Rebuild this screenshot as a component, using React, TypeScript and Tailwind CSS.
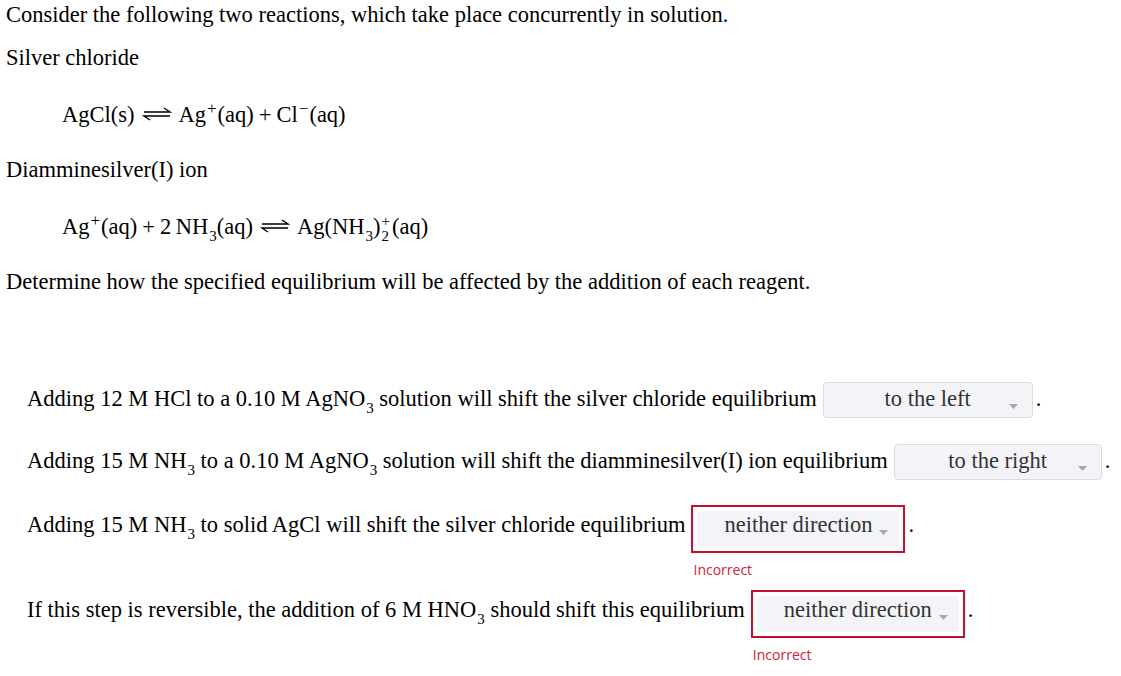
import type { ReactNode } from "react";

const serif = "font-['Liberation_Serif','Times_New_Roman',serif]";

function Sub({ children }: { children: ReactNode }) {
  return <span className="text-[15px] leading-[0] align-[-7px] ml-[1px]">{children}</span>;
}

function Sup({ children }: { children: ReactNode }) {
  return <span className="text-[17px] leading-[0] align-[8px] mx-[1px]">{children}</span>;
}

function Plus() {
  return <span className="mx-[5px]">+</span>;
}

/** stacked charge over count, e.g. )₂⁺ */
function SupSub({ sup, sub }: { sup: string; sub: string }) {
  return (
    <span className="inline-flex flex-col align-[8px] text-[15px] leading-[15px] px-[1px] mr-[1px]">
      <span>{sup}</span>
      <span>{sub}</span>
    </span>
  );
}

function Equilibrium() {
  return (
    <svg width="30" height="14" viewBox="0 0 30 14" className="inline-block mx-[7px] align-[1px]">
      <path d="M2 5 H28 L22 1" fill="none" stroke="#000" strokeWidth="1.3" />
      <path d="M28 9 H2 L8 13" fill="none" stroke="#000" strokeWidth="1.3" />
    </svg>
  );
}

function Caret({ className }: { className: string }) {
  return (
    <svg width="9" height="5" viewBox="0 0 9 5" className={`absolute ${className}`}>
      <path d="M0 0 H9 L4.5 5 Z" fill="#a8a8a8" />
    </svg>
  );
}

function Select({ value, width }: { value: string; width: string }) {
  return (
    <span
      className={`relative inline-flex justify-center h-[36px] pt-[2px] ${width} rounded-[4px] border border-[#d9dbe0] bg-[#f3f4f7] text-[#333]`}
    >
      {value}
      <Caret className="right-[14px] top-[21px]" />
    </span>
  );
}

function WrongSelect({ value }: { value: string }) {
  return (
    <span className="inline-flex flex-col items-start">
      <span className="inline-flex p-[4px] border-2 border-[#c8102e]">
        <span className="relative inline-flex justify-center h-[36px] w-[202px] px-[20px] rounded-[4px] bg-[#f3f4f7] text-[#333]">
          {value}
          <Caret className="right-[11px] top-[19px]" />
        </span>
      </span>
      <span className="mt-[8px] pl-[2px] text-[14px] leading-[18px] text-[#d0213a] font-['Open_Sans','Noto_Sans',sans-serif]">
        Incorrect
      </span>
    </span>
  );
}

function Row({ children, answer, className = "" }: { children: ReactNode; answer: ReactNode; className?: string }) {
  return (
    <div className={`flex items-baseline ${className}`}>
      <span>{children}</span>
      <span className="ml-[6px]">{answer}</span>
      <span className="ml-[3px]">.</span>
    </div>
  );
}

export default function App() {
  return (
    <div className={`${serif} text-[22.5px] leading-[28px] text-black bg-white min-h-[676px] px-[6px] pt-[1px]`}>
      <p>Consider the following two reactions, which take place concurrently in solution.</p>
      <p className="mt-[15px]">Silver chloride</p>

      <p className="mt-[29px] pl-[56px]">
        AgCl(s)
        <Equilibrium />
        Ag<Sup>+</Sup>(aq)<Plus />Cl<Sup>−</Sup>(aq)
      </p>

      <p className="mt-[27px]">Diamminesilver(I) ion</p>

      <p className="mt-[29px] pl-[56px] h-[28px]">
        Ag<Sup>+</Sup>(aq)<Plus />2&thinsp;NH<Sub>3</Sub>(aq)
        <Equilibrium />
        Ag(NH<Sub>3</Sub>)<SupSub sup="+" sub="2" />(aq)
      </p>

      <p className="mt-[27px]">Determine how the specified equilibrium will be affected by the addition of each reagent.</p>

      {/* reagent questions */}
      <div className="pl-[21px] mt-[86px] flex flex-col">
        <Row answer={<Select value="to the left" width="w-[210px]" />}>
          Adding 12 M HCl to a 0.10 M AgNO<Sub>3</Sub> solution will shift the silver chloride equilibrium
        </Row>

        <Row className="mt-[26px]" answer={<Select value="to the right" width="w-[208px]" />}>
          Adding 15 M NH<Sub>3</Sub> to a 0.10 M AgNO<Sub>3</Sub> solution will shift the diamminesilver(I) ion
          equilibrium
        </Row>

        <Row className="mt-[25px]" answer={<WrongSelect value="neither direction" />}>
          Adding 15 M NH<Sub>3</Sub> to solid AgCl will shift the silver chloride equilibrium
        </Row>

        <Row className="mt-[11px]" answer={<WrongSelect value="neither direction" />}>
          If this step is reversible, the addition of 6 M HNO<Sub>3</Sub> should shift this equilibrium
        </Row>
      </div>
    </div>
  );
}
